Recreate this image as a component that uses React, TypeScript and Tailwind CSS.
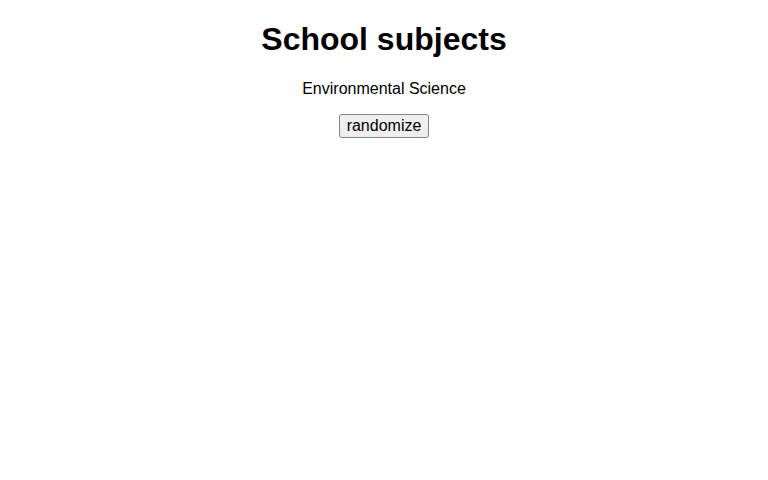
import React, { useState } from 'react';

const subjects = ['Environmental Science', 'Mathematics', 'History', 'Biology', 'Literature', 'Chemistry'];

export default function App() {
    const [subject, setSubject] = useState(subjects[0]);

    const randomize = () => {
        setSubject(subjects[Math.floor(Math.random() * subjects.length)]);
    };

    return (
        <div className="text-center text-black bg-white font-['Liberation_Sans',Arial,sans-serif]">
            <h1 className="text-[32px] leading-[normal] font-bold pt-[21.44px] mb-[21.44px]">School subjects</h1>
            <p className="text-base leading-[normal] mb-4">{subject}</p>
            <button
                type="button"
                onClick={randomize}
                className="text-base leading-[normal] px-[7px] py-[2px] bg-[#efefef] border border-[#858585] rounded-[3px]"
            >
                randomize
            </button>
        </div>
    );
}
